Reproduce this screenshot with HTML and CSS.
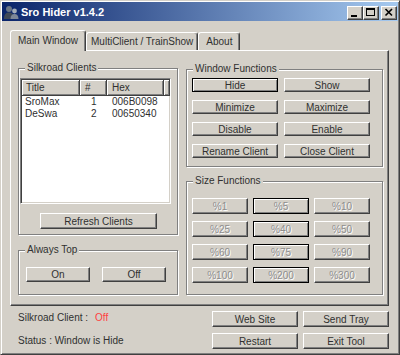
FILE: index.html
```html
<!DOCTYPE html>
<html lang="en">
<head>
    <meta charset="UTF-8">
    <title>Sro Hider v1.4.2</title>
    <link rel="stylesheet" href="styles.css">
</head>
<body>
    <div class="window">
        <div class="titlebar">
            <svg class="app-icon" viewBox="0 0 16 16" width="16" height="16">
                <circle cx="6" cy="5" r="3" fill="#6b7686"/>
                <path d="M1 15 C1 10 3 8.5 6 8.5 C9 8.5 11 10 11 15Z" fill="#3f4856"/>
                <circle cx="11.5" cy="7" r="2.4" fill="#a3acb8"/>
                <path d="M7.5 15 C7.5 11.5 9 10 11.5 10 C14 10 15.5 11.5 15.5 15Z" fill="#7d8797"/>
            </svg>
            <span class="title">Sro Hider v1.4.2</span>
            <div class="controls">
                <span class="ctl">
                    <svg viewBox="0 0 14 12" width="14" height="12"><rect x="3" y="8" width="6" height="2" fill="#000"/></svg>
                </span>
                <span class="ctl">
                    <svg viewBox="0 0 14 12" width="14" height="12"><rect x="2.5" y="1.5" width="8" height="7" fill="none" stroke="#000"/><rect x="2" y="1" width="9" height="2" fill="#000"/></svg>
                </span>
                <span class="ctl close">
                    <svg viewBox="0 0 14 12" width="14" height="12"><path d="M3.5 2 L10 8.5 M10 2 L3.5 8.5" stroke="#000" stroke-width="1.6"/></svg>
                </span>
            </div>
        </div>

        <div class="tabs">
            <div class="tab active">Main Window</div>
            <div class="tab multi">MultiClient / TrainShow</div>
            <div class="tab">About</div>
        </div>

        <div class="panel">
            <div class="col left">
                <div class="group clients">
                    <div class="legend">Silkroad Clients</div>
                    <div class="listview">
                        <div class="lv-head">
                            <span>Title</span><span>#</span><span>Hex</span><span></span>
                        </div>
                        <div class="lv-row"><span>SroMax</span><span>1</span><span>006B0098</span></div>
                        <div class="lv-row"><span>DeSwa</span><span>2</span><span>00650340</span></div>
                    </div>
                    <button class="btn refresh">Refresh Clients</button>
                </div>

                <div class="group ontop">
                    <div class="legend">Always Top</div>
                    <div class="pair">
                        <button class="btn">On</button>
                        <button class="btn">Off</button>
                    </div>
                </div>
            </div>

            <div class="col right">
                <div class="group winfn">
                    <div class="legend">Window Functions</div>
                    <div class="grid2">
                        <button class="btn def">Hide</button>
                        <button class="btn">Show</button>
                        <button class="btn">Minimize</button>
                        <button class="btn">Maximize</button>
                        <button class="btn">Disable</button>
                        <button class="btn">Enable</button>
                        <button class="btn">Rename Client</button>
                        <button class="btn">Close Client</button>
                    </div>
                </div>

                <div class="group sizefn">
                    <div class="legend">Size Functions</div>
                    <div class="grid3">
                        <button class="btn off">%1</button>
                        <button class="btn off def">%5</button>
                        <button class="btn off">%10</button>
                        <button class="btn off">%25</button>
                        <button class="btn off def">%40</button>
                        <button class="btn off">%50</button>
                        <button class="btn off">%60</button>
                        <button class="btn off def">%75</button>
                        <button class="btn off">%90</button>
                        <button class="btn off">%100</button>
                        <button class="btn off def">%200</button>
                        <button class="btn off">%300</button>
                    </div>
                </div>
            </div>
        </div>

        <div class="footer">
            <div class="status">
                <div>Silkroad Client :<span class="state">Off</span></div>
                <div>Status : Window is Hide</div>
            </div>
            <div class="footer-btns">
                <button class="btn">Web Site</button>
                <button class="btn">Send Tray</button>
                <button class="btn">Restart</button>
                <button class="btn">Exit Tool</button>
            </div>
        </div>
    </div>
</body>
</html>
```

FILE: styles.css
```css
html {
    box-sizing: border-box;
}
*, *:before, *:after {
    box-sizing: inherit;
}

body {
    margin: 0;
    background-color: #d4d0c8;
    font-family: "Liberation Sans", Arial, sans-serif;
    font-size: 10px;
    color: #303030;
}

.window {
    width: 400px;
    height: 355px;
    padding: 1px;
    border: 1px solid;
    border-color: #d4d0c8 #404040 #404040 #d4d0c8;
    box-shadow: inset 1px 1px #fff, inset -1px -1px #808080;
    background-color: #d4d0c8;
}

/* Barra de titulo */
.titlebar {
    height: 19px;
    display: flex;
    align-items: center;
    padding: 0 1px 0 1px;
    background: linear-gradient(to right, #0a246a, #a6caf0);
    color: #fff;
}

.app-icon {
    margin-right: 2px;
    flex: none;
}

.title {
    font-weight: bold;
    font-size: 11px;
}

.controls {
    margin-left: auto;
    display: flex;
    margin-top: 2px;
}

.ctl {
    width: 16px;
    height: 14px;
    display: flex;
    align-items: center;
    justify-content: center;
    background-color: #d4d0c8;
    border: 1px solid;
    border-color: #fff #404040 #404040 #fff;
    box-shadow: inset -1px -1px #808080;
}

.ctl.close {
    margin-left: 2px;
}

/* Abas */
.tabs {
    display: flex;
    align-items: flex-end;
    height: 20px;
    margin: 9px 0 0 8px;
    position: relative;
    z-index: 1;
}

.tab {
    height: 18px;
    padding: 0 7px;
    line-height: 17px;
    border: 1px solid;
    border-bottom: none;
    border-color: #fff #404040 #fff #fff;
    border-radius: 3px 3px 0 0;
    box-shadow: inset -1px 0 #808080;
    background-color: #d4d0c8;
    white-space: nowrap;
}

.tab.multi {
    padding: 0 4px;
}

.tab.active {
    height: 21px;
    margin-bottom: -1px;
    line-height: 19px;
}

.panel {
    width: 379px;
    height: 256px;
    margin-left: 8px;
    display: flex;
    gap: 8px;
    padding: 17px 5px 0 7px;
    border: 1px solid;
    border-color: #fff #404040 #404040 #fff;
    box-shadow: inset -1px -1px #808080;
}

.col.left {
    width: 160px;
}

.col.right {
    width: 197px;
    margin-top: 1px;
}

/* Caixas de grupo */
.group {
    border: 1px solid #808080;
    box-shadow: inset 1px 1px #fff, 1px 1px #fff;
}

.legend {
    width: fit-content;
    margin: -7px 0 0 6px;
    padding: 0 2px;
    line-height: 12px;
    background-color: #d4d0c8;
}

.clients {
    height: 167px;
}

.listview {
    width: 151px;
    height: 126px;
    margin: 4px 0 0 1px;
    padding: 1px;
    border: 1px solid;
    border-color: #808080 #fff #fff #808080;
    box-shadow: inset 1px 1px #404040, inset -1px -1px #d4d0c8;
    background-color: #fff;
}

.lv-head,
.lv-row {
    display: grid;
    grid-template-columns: 58px 27px 57px 1fr;
}

.lv-head span {
    height: 16px;
    line-height: 15px;
    padding-left: 5px;
    border-right: 1px solid #404040;
    border-bottom: 1px solid #404040;
    box-shadow: inset 1px 1px #fff, inset -1px -1px #808080;
    background-color: #d4d0c8;
}

.lv-head span:first-child {
    padding-left: 4px;
}

.lv-row span {
    line-height: 12px;
    padding-left: 5px;
}

.lv-row span:first-child {
    padding-left: 3px;
}

.lv-row span:nth-child(2) {
    padding-left: 11px;
}

/* Botoes */
.btn {
    display: block;
    padding: 0;
    font: inherit;
    color: #303030;
    background-color: #d4d0c8;
    border: 1px solid;
    border-color: #fff #404040 #404040 #fff;
    box-shadow: inset -1px -1px #808080;
    white-space: nowrap;
}

.btn.def {
    border-color: #000;
    box-shadow: inset 1px 1px #fff, inset -1px -1px #808080;
}

.btn.off {
    color: #8d8d8d;
    text-shadow: 1px 1px #fff;
}

.refresh {
    width: 117px;
    height: 16px;
    margin: 9px 0 0 21px;
}

.ontop {
    height: 45px;
    margin-top: 15px;
}

.pair {
    display: flex;
    gap: 12px;
    margin: 11px 0 0 7px;
}

.pair .btn {
    width: 64px;
    height: 15px;
}

.winfn {
    height: 98px;
}

.grid2 {
    display: grid;
    grid-template-columns: 86px 86px;
    grid-auto-rows: 14px;
    gap: 8px 6px;
    margin: 3px 0 0 5px;
}

.sizefn {
    height: 114px;
    margin-top: 14px;
}

.grid3 {
    display: grid;
    grid-template-columns: 56px 56px 56px;
    grid-auto-rows: 16px;
    gap: 7px 5px;
    margin: 11px 0 0 5px;
}

/* Rodape */
.footer {
    width: 379px;
    display: flex;
    justify-content: space-between;
    margin: 5px 0 0 8px;
    padding-left: 8px;
}

.status {
    display: grid;
    grid-template-rows: 13px 13px;
    row-gap: 10px;
    line-height: 13px;
}

.state {
    color: #ff4040;
    margin-left: 7px;
}

.footer-btns {
    display: grid;
    grid-template-columns: 86px 86px;
    grid-auto-rows: 16px;
    gap: 6px 5px;
}
```
